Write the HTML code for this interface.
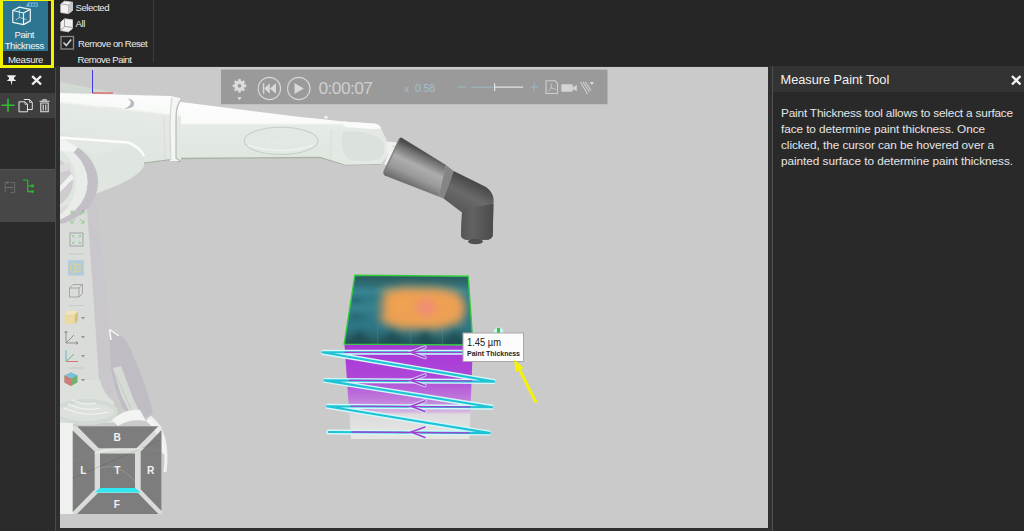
<!DOCTYPE html>
<html><head><meta charset="utf-8">
<style>
*{box-sizing:border-box;margin:0;padding:0}
html,body{width:1024px;height:531px;overflow:hidden;background:#262626;font-family:"Liberation Sans",sans-serif}
.a{position:absolute}
.t{position:absolute;white-space:nowrap;color:#ececec}
</style></head><body>
<!-- ribbon -->
<div class="a" style="left:0;top:0;width:1024px;height:67px;background:#262626"></div>
<!-- paint thickness button -->
<div class="a" style="left:0;top:0;width:54px;height:68px;border:3px solid #f2f200;border-top-width:1px;background:#262626"></div>
<div class="a" style="left:3px;top:1px;width:45px;height:50px;background:#2c7691"></div>
<div class="t" style="left:0;top:29px;width:48.5px;text-align:center;font-size:9.6px;line-height:11px;color:#f4f4f4;letter-spacing:-0.45px">Paint<br>Thickness</div>
<div class="t" style="left:0;top:54px;width:51px;text-align:center;font-size:9.6px;line-height:11px;color:#ececec;letter-spacing:-0.3px">Measure</div>
<!-- ribbon items -->
<div class="t" style="left:75.5px;top:1.5px;font-size:9.6px;line-height:11px;letter-spacing:-0.47px">Selected</div>
<div class="t" style="left:75.5px;top:18.4px;font-size:9.6px;line-height:11px;letter-spacing:-0.4px">All</div>
<div class="t" style="left:78px;top:38px;font-size:9.6px;line-height:11px;letter-spacing:-0.5px">Remove on Reset</div>
<div class="t" style="left:77.5px;top:54px;font-size:9.6px;line-height:11px;letter-spacing:-0.52px">Remove Paint</div>
<div class="a" style="left:153px;top:0;width:1px;height:62px;background:#3c3c3c"></div>

<!-- left panel -->
<div class="a" style="left:0;top:68px;width:55px;height:463px;background:#2b2b2b"></div>
<div class="a" style="left:0;top:93px;width:55px;height:25px;background:#3f3f3f"></div>
<div class="a" style="left:0;top:169px;width:55px;height:53px;background:#474747"></div>
<div class="a" style="left:55px;top:67px;width:1px;height:464px;background:#4a4a4a"></div>

<!-- viewport frame -->
<div class="a" style="left:56px;top:66px;width:717px;height:465px;background:#2f2f2f"></div>
<div class="a" id="vp" style="left:60px;top:67px;width:708px;height:461px;background:#cacaca;overflow:hidden"></div>
<div class="a" style="left:772px;top:66px;width:1px;height:465px;background:#505050"></div>

<!-- right panel -->
<div class="a" style="left:773px;top:66px;width:251px;height:465px;background:#292929"></div>
<div class="a" style="left:773px;top:66px;width:251px;height:26px;background:#333333"></div>
<div class="t" style="left:780.5px;top:71.5px;font-size:12.8px;line-height:15px;color:#f2f2f2;letter-spacing:-0.03px">Measure Paint Tool</div>
<div class="t" style="left:781px;top:104.8px;font-size:11.8px;line-height:16px;color:#e6e6e6;letter-spacing:-0.18px">Paint Thickness tool allows to select a surface</div>
<div class="t" style="left:781px;top:121px;font-size:11.8px;line-height:16px;color:#e6e6e6;letter-spacing:-0.083px">face to determine paint thickness. Once</div>
<div class="t" style="left:781px;top:137px;font-size:11.8px;line-height:16px;color:#e6e6e6;letter-spacing:-0.067px">clicked, the cursor can be hovered over a</div>
<div class="t" style="left:781px;top:153.4px;font-size:11.8px;line-height:16px;color:#e6e6e6;letter-spacing:-0.047px">painted surface to determine paint thickness.</div>
<svg class="a" style="left:60px;top:67px" width="708" height="461" viewBox="60 67 708 461">
<defs>
<linearGradient id="armU" gradientUnits="userSpaceOnUse" x1="110" y1="93" x2="102.3" y2="163">
<stop offset="0" stop-color="#fbfcfb"/><stop offset="0.19" stop-color="#f8faf8"/><stop offset="0.23" stop-color="#e5eae5"/><stop offset="1" stop-color="#dfe5df"/></linearGradient>
<linearGradient id="armF" gradientUnits="userSpaceOnUse" x1="0" y1="104" x2="0" y2="160">
<stop offset="0" stop-color="#fcfdfc"/><stop offset="0.34" stop-color="#f9fbf9"/><stop offset="0.38" stop-color="#e5ebe5"/><stop offset="1" stop-color="#dfe6df"/></linearGradient>
<linearGradient id="noz1" gradientUnits="userSpaceOnUse" x1="427" y1="153" x2="411" y2="187">
<stop offset="0" stop-color="#4c4c4c"/><stop offset="0.12" stop-color="#6e6e6e"/><stop offset="0.42" stop-color="#adadad"/><stop offset="0.7" stop-color="#9a9a9a"/><stop offset="1" stop-color="#6a6a6a"/></linearGradient>
<linearGradient id="noz2" gradientUnits="userSpaceOnUse" x1="476" y1="182" x2="462" y2="210">
<stop offset="0" stop-color="#474747"/><stop offset="0.5" stop-color="#6a6a6a"/><stop offset="1" stop-color="#5a5a5a"/></linearGradient>
<linearGradient id="noz3" gradientUnits="userSpaceOnUse" x1="461" y1="0" x2="494" y2="0">
<stop offset="0" stop-color="#555"/><stop offset="0.35" stop-color="#626262"/><stop offset="1" stop-color="#4a4a4a"/></linearGradient>
<radialGradient id="blob" gradientUnits="userSpaceOnUse" cx="424" cy="307" r="46" gradientTransform="translate(424 307) scale(1 0.5) translate(-424 -307)">
<stop offset="0" stop-color="#f2907c"/><stop offset="0.18" stop-color="#f4a05a"/><stop offset="0.7" stop-color="#f0a04e"/><stop offset="0.88" stop-color="#b49a66" stop-opacity="0.75"/><stop offset="1" stop-color="#2e7a88" stop-opacity="0"/></radialGradient>
<linearGradient id="front" gradientUnits="userSpaceOnUse" x1="0" y1="345" x2="0" y2="439">
<stop offset="0" stop-color="#a836d6"/><stop offset="0.34" stop-color="#ae46d8"/><stop offset="0.58" stop-color="#c07ada"/><stop offset="0.7" stop-color="#d2aede"/><stop offset="0.74" stop-color="#dedcde"/><stop offset="1" stop-color="#e6e7e3"/></linearGradient>
<linearGradient id="topface" gradientUnits="userSpaceOnUse" x1="0" y1="275" x2="0" y2="345">
<stop offset="0" stop-color="#2b5a5c"/><stop offset="0.25" stop-color="#2f7b88"/><stop offset="0.75" stop-color="#2e7686"/><stop offset="1" stop-color="#29585a"/></linearGradient>
<linearGradient id="col" x1="0" y1="0" x2="1" y2="0">
<stop offset="0" stop-color="#dadeda"/><stop offset="1" stop-color="#d2d4d2"/></linearGradient>
</defs>

<!-- ===== robot base (translucent) ===== -->
<polygon points="60,194 94,194 99,300 104,372 108,420 60,420" fill="#d9dcd9"/>
<polygon points="86,196 96,196 106,290 113,395 100,395 93,290" fill="#c9c7cc"/>
<path d="M109.7,329.6 L121,336 Q127,341 131,350 L142,377 L151,404 L153,414 L140,420 L123,408.7 L115,388 L111,369 L109.5,337.5 Z" fill="#c0bcc4"/>
<path d="M109.5,329.5 L119,336 M109.5,329.5 L111,340" fill="none" stroke="#f6f8f6" stroke-width="1.5"/>
<path d="M113,368 L121,395 L130,413 L140,413 L133,398 L121,366 Z" fill="#d6dbd6"/>
<path d="M116,375 L133,414" fill="none" stroke="#b0b6b0" stroke-width="0.5"/>
<path d="M60,380 L100,380 Q104,395 114,402 L114,423 L60,423 Z" fill="#dce1dc"/>
<ellipse cx="86" cy="412" rx="30" ry="11" fill="none" stroke="#d3d9d3" stroke-width="4"/>
<path d="M64,408 Q85,418 108,412 M68,404 Q85,412 100,408 M72,400 Q85,406 96,403" fill="none" stroke="#f2f4f2" stroke-width="1.1"/>
<path d="M112,420 Q125,408 140,410 L146,421 Q130,418 118,426 Z" fill="#f2f4f2"/>
<path d="M149,417 Q166,428 165,455 L161,452 Q160,432 146,421 Z" fill="#f4f6f4"/>
<polygon points="60,423 73,423 73,514 60,514" fill="#eef1ee"/>
<!-- ===== shoulder ===== -->
<polygon points="60,82 122,94 60,94" fill="#d2d8d2"/>
<path d="M60,135 L131,143 Q142,148 144,160 L144,166 Q140,175 118,185 L93,195 L60,208 Z" fill="#dfe5df"/>
<path d="M136,146 Q144,151 146,162" fill="none" stroke="#c4c0c8" stroke-width="1.8"/>
<!-- joint ring -->
<path d="M45,138 A53,44 0 0 1 45,226 L45,222 A42.5,40 0 0 0 45,142 Z" fill="#c3bfc7"/>
<path d="M45,142 A42.5,40 0 0 1 45,222 L45,219 A31,37 0 0 0 45,145 Z" fill="#e9ece9"/>
<path d="M45,156 A28,26 0 0 1 45,208 Z" fill="#cfcccf"/>
<path d="M60,136 L131,143 Q120,150 96,156 L78,147 Z" fill="#e2e8e2"/>
<polygon points="60,137 78,147.2 74,152 60,150.5" fill="#f2f4f2"/>
<polygon points="60,165 70,163 71,170 60,172" fill="#dcdadc"/>
<polygon points="60,186 71,174 74,178 60,192" fill="#f0f2f0"/>
<!-- ===== upper arm ===== -->
<path d="M60,93 L140,95.3 L171,96.1 L181,101 L181,161 L171,160 L144,163 Q143,150 133,144 L60,135 Z" fill="url(#armU)"/>
<path d="M60,137.5 L128,142.5 Q140,147 144,156" fill="none" stroke="#fbfcfb" stroke-width="2.6"/>
<path d="M100,106 L126,108.5 L112,110 Z" fill="#e6ebe6"/>
<path d="M126.5,98.3 Q135,99.5 134.2,104.5 Q133,108.8 124,108.8 Q130.5,106.5 130.8,102.8 Q130.5,99.8 126.5,98.3 Z" fill="#b9b9c1"/>
<path d="M144,163 L171,159.7 L181,161.5" fill="none" stroke="#a9b1a3" stroke-width="1.2"/>
<!-- ring -->
<path d="M170,96 L180,98 L181,102 L176,114 L176,158 L181,161 L170,161 Z" fill="#f4f6f4"/>
<path d="M181,100 Q176,104 176,120 L176,158 Q178,160 181,161" fill="none" stroke="#b7bbb7" stroke-width="1.2"/>
<path d="M172,98 Q170,110 170,130 L171,160" fill="none" stroke="#cfd3cf" stroke-width="1"/>
<path d="M164,116 L165,160" fill="none" stroke="#d6dad6" stroke-width="0.8"/>

<!-- ===== forearm ===== -->
<path d="M181,102 L300,117 L326,119.5 L342.6,121.6 L375.7,123.8 Q380,125 381,128.5 L387,142.6 L387.5,156 L381,164 L345.6,164.8 L330,160.5 L320,157.5 L181,158.5 Z" fill="url(#armF)"/>
<path d="M181,158.5 L320,157.5 L330,160.5 L345.6,164.8 L381,164" fill="none" stroke="#aab3a4" stroke-width="1.3"/>
<ellipse cx="281.1" cy="140.8" rx="37" ry="13.6" fill="#e2e8e2" stroke="#c8cec8" stroke-width="1.1"/>
<path d="M248,145 Q281,156 314,145" fill="none" stroke="#f2f5f2" stroke-width="1.2"/>
<path d="M262,142 L300,142" stroke="#eef2ee" stroke-width="1" stroke-dasharray="2 3"/>
<circle cx="326" cy="117.3" r="2" fill="#eef1ee" stroke="#c6cac6" stroke-width="0.6"/>
<path d="M331,129.8 L380,129.8 Q386,136 387,143 L387.5,156 L381,164 L345.6,164.8 L331,160 Z" fill="#e3e8e3"/>
<path d="M342,131 Q375,129 384,142 Q388,155 378,160 Q360,164 348,160 Q338,150 342,131 Z" fill="#dbe2db" stroke="#eaeeea" stroke-width="0.8"/>
<path d="M342.6,121.6 L375.7,123.8 Q380,125 381,128.5 L372,129 L345,127 Z" fill="#fafbfa"/>
<path d="M331,129.8 L331,160" stroke="#d6dcd6" stroke-width="0.8"/>
<!-- wrist neck -->
<path d="M386.5,141.5 L399.8,142.8 L398.5,150.5 L387,165.5 L384,164 L387.5,156 Z" fill="#eef1ee"/>
<path d="M399.8,142.8 L398.5,150.5 L387,165.5" fill="none" stroke="#b8bcb8" stroke-width="1"/>
<path d="M392,146 L397,147" stroke="#c8ccc8" stroke-width="0.8"/>
<!-- ===== nozzle ===== -->
<path d="M401.3,137.4 L446,165 L438.5,196.4 L386,176 Q382.5,174.5 383.5,171 L398.5,139.8 Q399.8,137.2 401.3,137.4 Z" fill="url(#noz1)"/>
<path d="M399.5,139 L384.5,172" stroke="#7a7a7a" stroke-width="1.2" opacity="0.8"/>
<path d="M446,165 L453.7,171 L443.6,198.5 L438.5,196.4 Z" fill="#848484"/>
<path d="M453.7,171 L486,187 Q492.7,192 493.6,199 L492.7,236 Q491,239.7 487,239.7 L466,239.7 Q461,239 461,234.6 L462,212.5 L443.6,198.5 Z" fill="url(#noz2)"/>
<path d="M462,212.5 Q480,205 493.4,204 L492.7,236 Q491,239.7 487,239.7 L466,239.7 Q461,239 461,234.6 Z" fill="url(#noz3)"/>
<ellipse cx="475.5" cy="241.5" rx="7.5" ry="2.8" fill="#505050"/>
<!-- axes -->
<line x1="92.5" y1="70" x2="92.5" y2="93" stroke="#3a3ae0" stroke-width="1"/>
<line x1="92.5" y1="93" x2="113" y2="93" stroke="#e03a3a" stroke-width="1"/>

<!-- ===== cube ===== -->
<polygon points="344.5,344.5 472.9,345.2 469.4,439 351,439" fill="url(#front)"/>
<clipPath id="tfc"><polygon points="354.9,275.2 468.2,276.3 473,345 344.2,344.1"/></clipPath>
<filter id="bl3" x="-30%" y="-30%" width="160%" height="160%"><feGaussianBlur stdDeviation="3"/></filter>
<filter id="bl5" x="-30%" y="-30%" width="160%" height="160%"><feGaussianBlur stdDeviation="5"/></filter>
<g clip-path="url(#tfc)">
<polygon points="354.9,275.2 468.2,276.3 473,345 344.2,344.1" fill="url(#topface)"/>
<g filter="url(#bl3)">
<path d="M340,289 L475,289 L475,293 L340,293 Z" fill="#4a9aa6" opacity="0.55"/>
<path d="M340,306 L380,306 L380,310 L340,310 Z" fill="#4a9aa6" opacity="0.5"/>
<path d="M352,296 L366,302 L352,304 Z M352,312 L366,318 L352,320 Z" fill="#1e4c52" opacity="0.6"/>
</g>
<g filter="url(#bl5)">
<path d="M380,291 L405,287 L440,288 L458,292 L466,305 L462,322 L440,329 L400,329 L384,323 L378,316 L386,310 L378,304 L386,298 Z" fill="#eea052"/>
</g>
<g filter="url(#bl3)">
<path d="M426,296 L438,307.7 L426,319 L414,307.7 Z" fill="#f28a7c" opacity="0.75"/>
<ellipse cx="402" cy="304" rx="9" ry="6" fill="#f6a450" opacity="0.5"/>
</g>
<g filter="url(#bl3)" opacity="0.8">
<path d="M344,346 L359.6,330 L375,346 L392.7,331 L410,346 L424.4,331 L440,346 L454.5,331 L472,346 Z" fill="#1f4a50"/>
</g>
<g stroke="#5aa4b0" stroke-width="1" opacity="0.25">
<path d="M377.7,326 L377.7,344 M410.8,327 L410.8,344 M442.5,327 L442.5,344"/>
</g>
</g>
<polygon points="354.9,275.2 468.2,276.3 473,345 344.2,344.1" fill="none" stroke="#30cc3c" stroke-width="1.4"/>

<!-- zigzag -->
<g fill="none" stroke-linejoin="miter" stroke-linecap="round">
<path d="M462,352.3 L321.7,352.3 L495,381.6 L324,380.4 L492.8,407.3 L326.4,406.2 L490.5,433.1 L328.7,432" stroke="#d4f8fa" stroke-width="5" opacity="1"/>
<path d="M462,352.3 L321.7,352.3 L495,381.6 L324,380.4 L492.8,407.3 L326.4,406.2 L490.5,433.1 L328.7,432" stroke="#1ec4d6" stroke-width="2.1"/>
<path d="M425,347 L411,352.3 L425,357.5 M425,375 L411,380.4 L425,385.5 M425,401 L411,406.2 L425,411.5 M425,427 L411,432 L425,437.5" stroke="#d2f4f8" stroke-width="3.6" opacity="0.7"/>
<path d="M425,347 L411,352.3 L425,357.5 M425,375 L411,380.4 L425,385.5 M425,401 L411,406.2 L425,411.5 M425,427 L411,432 L425,437.5" stroke="#a440d0" stroke-width="1.5"/>
<path d="M462,352.3 L345,352.3 M472,380.8 L350,380.4 M470,406.9 L351,406.2 M469,432.9 L352,432" stroke="#a440d0" stroke-width="1.3"/>
</g>
<!-- green marker -->
<path d="M493.5,333 A5,5.5 0 0 1 503.5,333 Z" fill="#c8f8f8"/>
<rect x="497" y="328" width="3" height="5" fill="#32c63e"/>
<!-- tooltip -->
<rect x="463" y="333" width="60.5" height="28.5" fill="#fcfcfc" stroke="#a8a8a8" stroke-width="1"/>
<text x="467" y="345.8" font-family="Liberation Sans" font-size="10" fill="#222" textLength="34" lengthAdjust="spacingAndGlyphs">1.45 µm</text>
<text x="467" y="355.6" font-family="Liberation Sans" font-size="7.8" font-weight="bold" fill="#1e1e1e" textLength="53" lengthAdjust="spacingAndGlyphs">Paint Thickness</text>
<!-- yellow arrow -->
<line x1="535.6" y1="401.5" x2="519" y2="368.5" stroke="#f4f400" stroke-width="2.8" stroke-linecap="round"/>
<polygon points="514.1,359.6 523.5,368 515.6,372" fill="#f4f400"/>

<!-- ===== left toolbar icons ===== -->
<rect x="60" y="198" width="33" height="195" fill="#ffffff" opacity="0.0"/>

<!-- ===== view cube ===== -->
<path d="M60,470 Q100,440 165,452" fill="none" stroke="#f0f2f0" stroke-width="2"/>
<path d="M150,417 Q170,432 165,472" fill="none" stroke="#eef1ee" stroke-width="3"/>
<g>
<rect x="73" y="426" width="89" height="88" fill="#e2e6e2" opacity="0.62"/>
<g fill="#6c6c6c" opacity="0.84">
<polygon points="77,426.3 158.4,426.3 136.4,448.2 98.8,448.2"/>
<polygon points="72.7,430.4 94.7,451.5 94.7,489.5 72.7,512"/>
<polygon points="161.5,430 140.7,451.5 140.7,489.5 161.5,511"/>
<polygon points="77,514 158.4,514 138,493 98,493"/>
<rect x="100" y="453.5" width="35" height="34.5"/>
</g>
<path d="M73,478 Q120,458 160,440" fill="none" stroke="#2a2a2a" stroke-width="0.5" opacity="0.3"/>
<path d="M95,470 Q125,455 150,505" fill="none" stroke="#e8ece8" stroke-width="1" opacity="0.2"/>
<polygon points="99.9,488 135,488 140.7,492.5 94.7,492.5" fill="#30e8f2"/>
<g font-family="Liberation Sans" font-weight="bold" font-size="10.2" fill="#f2f2f2" text-anchor="middle">
<text x="117.3" y="440.7">B</text><text x="83.3" y="473.7">L</text><text x="117.3" y="473.7">T</text><text x="150.8" y="473.7">R</text><text x="116.8" y="507.5">F</text>
</g>
</g>
</svg>

<svg class="a" style="left:0;top:0" width="1024" height="531" viewBox="0 0 1024 531">
<!-- paint thickness icon -->
<g fill="none" stroke="#f0f4f6" stroke-width="1.2" stroke-linejoin="round">
<path d="M12.8,10.5 L19.3,7.1 L30.3,9.3 L30.3,20.9 L23.5,24.6 L12.8,22.3 Z"/>
<path d="M12.8,10.5 L23.5,13 L30.3,9.3 M23.5,13 L23.5,24.6"/>
<path d="M19.3,9.6 L19.3,17.5 L15.9,20 M19.3,17.5 L26.6,19.5" stroke-width="0.8" opacity="0.8"/>
</g>
<path d="M25.8,6.8 L28,2.5 L37.9,2.5 L37.9,6.8 Z" fill="#6ab6e0"/>
<g fill="#2d6f8a"><rect x="29.5" y="3.6" width="1.6" height="2.2"/><rect x="32.2" y="3.6" width="1.6" height="2.2"/><rect x="34.9" y="3.6" width="1.6" height="2.2"/></g>

<!-- selected icon -->
<g stroke-linejoin="round">
<path d="M60.8,4 L64.5,1.2 L72.5,2.2 L72.5,10.5 L68.5,13.6 L60.8,12.6 Z" fill="#f2f2f2" stroke="#dcdcdc" stroke-width="0.8"/>
<path d="M60.8,4 L68.5,5 L72.5,2.2 M68.5,5 L68.5,13.6" fill="none" stroke="#9a9a9a" stroke-width="0.8"/>
<path d="M68.5,5 L72.5,2.2 L72.5,10.5 L68.5,13.6 Z" fill="#c8c8c8"/>
</g>
<!-- all icon -->
<g stroke-linejoin="round">
<path d="M60.8,22 L64.5,18.8 L72.5,19.8 L72.5,28.5 L68.5,31.8 L60.8,30.6 Z" fill="#f0f0f0" stroke="#dcdcdc" stroke-width="0.8"/>
<path d="M64.5,18.8 L64.5,26.5 L60.8,30.6 M64.5,26.5 L72.5,27.4" fill="none" stroke="#8c8c8c" stroke-width="0.8"/>
</g>
<!-- checkbox -->
<rect x="61" y="36.5" width="12.5" height="12.5" fill="none" stroke="#8a8a8a" stroke-width="1.3"/>
<path d="M63.5,42.5 L66.3,45.6 L71.2,39.5" fill="none" stroke="#d0d0d0" stroke-width="1.6"/>

<!-- left panel: pin & close -->
<path d="M7,75.3 L16,75.3 L15,77 L14,77.5 L14,79 L16.3,81 L12.3,81 L11.5,85.5 L10.7,81 L6.7,81 L9,79 L9,77.5 L8,77 Z" fill="#ececec"/>
<path d="M32.2,76.2 L41,84.5 M41,76.2 L32.2,84.5" stroke="#f0f0f0" stroke-width="2.4"/>
<!-- plus copy trash -->
<path d="M1.5,105.3 L14.5,105.3 M8,98.8 L8,111.8" stroke="#2fbf2f" stroke-width="1.6"/>
<g fill="none" stroke="#e4e4e4" stroke-width="1">
<path d="M23.8,99.5 L29.5,99.5 L32.3,102.3 L32.3,109.5 L27.5,109.5"/>
<path d="M29.5,99.5 L29.5,102.3 L32.3,102.3" stroke-width="0.8"/>
<path d="M19,101.8 L25,101.8 L27.5,104.3 L27.5,111.8 L19,111.8 Z" fill="#3f3f3f"/>
<path d="M25,101.8 L25,104.3 L27.5,104.3" stroke-width="0.8"/>
</g>
<g fill="none" stroke="#e6e6e6" stroke-width="1.1">
<path d="M39.5,101.3 L49.5,101.3 M42.5,101.3 L43,99.8 L46,99.8 L46.5,101.3 M40.8,103 L40.8,111.8 L48.2,111.8 L48.2,103 Z M43.2,104.5 L43.2,110.5 M45.8,104.5 L45.8,110.5"/>
</g>
<!-- tree icons -->
<g fill="none" stroke="#6c6c6c" stroke-width="1">
<path d="M5.2,192.6 L5.2,182.5 L8.5,182.5 M7.5,181 L8.5,182.5 L7.5,184 M5.2,187.5 L12,187.5 M10.5,182.5 L14.6,182.5 L14.6,192.6 L10.3,192.6"/>
</g>
<circle cx="12" cy="187.5" r="1" fill="#6c6c6c"/>
<g fill="none" stroke="#2fb02f" stroke-width="1.3">
<path d="M23.1,180.2 L27.7,180.2 L27.7,191.5 L32.5,191.5 M27.7,185.9 L32.5,185.9"/>
</g>
<circle cx="32.5" cy="185.9" r="1.6" fill="#2fb02f"/><circle cx="32.5" cy="191.5" r="1.6" fill="#2fb02f"/>
<rect x="0" y="169" width="54" height="1" fill="#5a5a5a" opacity="0.6"/>
<!-- ===== playback bar ===== -->
<rect x="221" y="69.6" width="386.5" height="34.6" fill="#9a9a9a"/>
<g fill="#dcdcdc">
<path d="M244.28,84.73 L246.03,84.81 L246.03,86.79 L244.28,86.87 L243.64,88.43 L244.81,89.72 L243.42,91.11 L242.13,89.94 L240.57,90.58 L240.49,92.33 L238.51,92.33 L238.43,90.58 L236.87,89.94 L235.58,91.11 L234.19,89.72 L235.36,88.43 L234.72,86.87 L232.97,86.79 L232.97,84.81 L234.72,84.73 L235.36,83.17 L234.19,81.88 L235.58,80.49 L236.87,81.66 L238.43,81.02 L238.51,79.27 L240.49,79.27 L240.57,81.02 L242.13,81.66 L243.42,80.49 L244.81,81.88 L243.64,83.17 Z" stroke="#dcdcdc" stroke-width="0.6" stroke-linejoin="round"/>
<circle cx="239.5" cy="85.8" r="4.9"/>
<circle cx="239.5" cy="85.8" r="1.9" fill="#9a9a9a"/>
<path d="M237.3,97.2 L241.7,97.2 L239.5,100.3 Z"/>
</g>
<g fill="none" stroke="#d6d6d6" stroke-width="1.2">
<circle cx="269.4" cy="88.5" r="11.2"/>
<circle cx="298.8" cy="88.5" r="11.2"/>
</g>
<g fill="#d8d8d8">
<rect x="262.8" y="83.2" width="1.5" height="10.5"/>
<path d="M264.3,88.5 L269.8,83.2 L269.8,93.7 Z M269.8,88.5 L276,83.2 L276,93.7 Z"/>
<path d="M294.5,83 L303.8,88.5 L294.5,94 Z"/>
</g>
<text x="318.5" y="94" font-family="Liberation Sans" font-size="17.4" fill="#cfcfcf" letter-spacing="-0.6">0:00:07</text>
<text x="404.3" y="91.5" font-family="Liberation Sans" font-size="9.6" fill="#a2bed2">x</text>
<text x="415" y="92" font-family="Liberation Sans" font-size="10.6" fill="#a2bed2" letter-spacing="-0.2">0.58</text>
<g stroke="#9cb2bc" stroke-width="1.3">
<path d="M457.5,87.2 L466,87.2 M530.5,87.2 L538,87.2 M534.2,83.5 L534.2,91"/>
</g>
<path d="M471,87.2 L494.6,87.2" stroke="#98b0b8" stroke-width="1.4"/>
<path d="M494.6,87.2 L523,87.2 M494.6,83.3 L494.6,91" stroke="#e2e2e2" stroke-width="1.2"/>
<!-- pdf -->
<g fill="none" stroke="#cecece" stroke-width="1.1">
<path d="M546,80.8 L555,80.8 L557.5,83.5 L557.5,93.5 L546,93.5 Z"/>
<path d="M551,83.5 L551.5,88 L548,91.5 M551.5,88 L556,89.5" stroke-width="0.8"/>
</g>
<!-- camera -->
<rect x="561.3" y="84.3" width="11.5" height="7.5" rx="1.2" fill="#d4d4d4"/>
<path d="M572.5,87.5 L576.8,84.8 L576.8,91.3 L572.5,89" fill="#d4d4d4"/>
<!-- vlogo -->
<g stroke="#d0d0d0" stroke-width="1.1">
<path d="M580.5,82 L587.5,94 M583,82 L589.5,92 M585.5,82 L591,90.5"/>
</g>
<path d="M589.8,82 L594,82 L591.9,85.3 Z" fill="#d8d8d8"/>

<!-- ===== viewport toolbar ===== -->
<g opacity="0.75">
<g fill="none" stroke="#7cc87c" stroke-width="1">
<path d="M71,211 L75,215 M71,211 L71,214 M71,211 L74,211 M84,211 L80,215 M84,211 L84,214 M84,211 L81,211 M71,223 L75,219 M71,223 L71,220 M71,223 L74,223 M84,223 L80,219 M84,223 L84,220 M84,223 L81,223"/>
</g>
<rect x="70" y="233" width="13" height="13" fill="none" stroke="#8a8a8a" stroke-width="0.9"/>
<g fill="none" stroke="#7cc87c" stroke-width="0.9">
<path d="M72.5,235.5 L75,238 M72.5,235.5 L72.5,237 M72.5,235.5 L74,235.5 M80.5,235.5 L78,238 M80.5,235.5 L80.5,237 M80.5,235.5 L79,235.5 M72.5,243.5 L75,241 M72.5,243.5 L72.5,242 M72.5,243.5 L74,243.5 M80.5,243.5 L78,241 M80.5,243.5 L80.5,242 M80.5,243.5 L79,243.5"/>
</g>
<path d="M69,254 L84,254" stroke="#bdbdbd" stroke-width="0.8"/>
<rect x="68" y="260.2" width="15.8" height="15.4" fill="#a6c6d8"/>
<g fill="none" stroke="#e8d070" stroke-width="1">
<path d="M75,263.5 Q70.5,263.5 70.5,268 Q70.5,272.5 75,272.5 Z M75,264.8 L81,264.8 M75,268 L81,268 M75,271.2 L81,271.2"/>
</g>
<g fill="none" stroke="#8a8a8a" stroke-width="0.9" stroke-linejoin="round">
<path d="M69.5,288 L73,284.5 L82.5,284.5 L82.5,293.5 L79,297 L69.5,297 Z M69.5,288 L79,288 L82.5,284.5 M79,288 L79,297"/>
</g>
<path d="M69,305.5 L84,305.5" stroke="#bdbdbd" stroke-width="0.8"/>
<g opacity="0.7">
</g>
<!-- yellow cube -->
<path d="M64.5,314.5 L67.5,311 L77.8,311 L77.8,320.5 L74.8,324 L64.5,324 Z" fill="#f0d890"/>
<path d="M74.8,314.5 L77.8,311 L77.8,320.5 L74.8,324 Z" fill="#d8b860"/>
<path d="M64.5,314.5 L67.5,311 L77.8,311 L74.8,314.5 Z" fill="#f8e8b0"/>
<path d="M81,317 L85,317 L83,319.5 Z" fill="#7a7a7a"/>
<!-- axis icon -->
<g fill="none" stroke="#6a6a6a" stroke-width="0.9">
<path d="M66,331 L66,343 L78,343 M66,343 L74,335 M64.5,333 L66,331 L67.5,333 M76,341.5 L78,343 L76,344.5"/>
</g>
<path d="M81,336 L85,336 L83,338.5 Z" fill="#7a7a7a"/>
<!-- colored axis -->
<g fill="none" stroke-width="1">
<path d="M66,350 L66,361.5" stroke="#40a8e0"/>
<path d="M66,361.5 L78,361.5" stroke="#e05050"/>
<path d="M66,361.5 L74,354" stroke="#40b040"/>
</g>
<path d="M81,355 L85,355 L83,357.5 Z" fill="#7a7a7a"/>
<path d="M69,368 L84,368" stroke="#bdbdbd" stroke-width="0.8"/>
<!-- color cube -->
<path d="M71,372.5 L77.5,375.5 L77.5,382.5 L71,386 L64.5,382.5 L64.5,375.5 Z" fill="#50a050"/>
<path d="M71,372.5 L77.5,375.5 L71,378.8 L64.5,375.5 Z" fill="#58b8d8"/>
<path d="M64.5,375.5 L71,378.8 L71,386 L64.5,382.5 Z" fill="#d05858"/>
<path d="M81,379 L85,379 L83,381.5 Z" fill="#7a7a7a"/>
</g>
<!-- close X right panel -->
<path d="M1012,76 L1020.5,84.5 M1020.5,76 L1012,84.5" stroke="#f4f4f4" stroke-width="2.3"/>
</svg>

</body></html>
